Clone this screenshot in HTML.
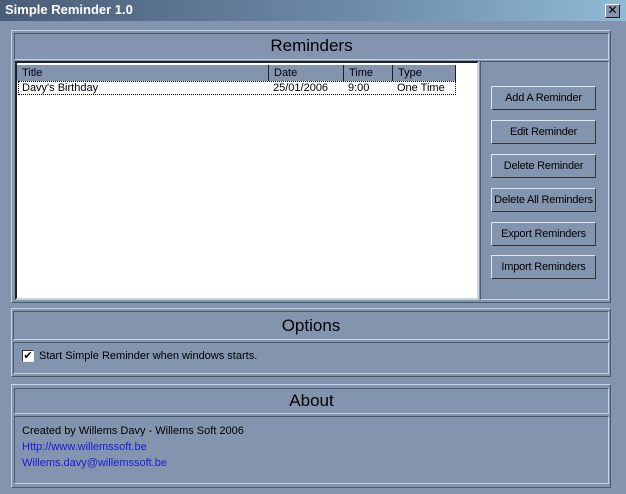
<html><head><style>
body{margin:0;width:626px;height:494px;background:#8395ae;font-family:"Liberation Sans",sans-serif;font-size:11px;position:relative;overflow:hidden}
div{position:absolute;box-sizing:border-box}
.t{left:0;top:0;width:626px;height:21px;background:linear-gradient(90deg,#4a5d78,#6f8eaa 60%,#8fbad6);color:#fff;font-weight:bold;font-size:13px;padding:2px 5px}
.x{left:605px;top:4px;width:15px;height:14px;background:#8395ae;border:1px solid;border-color:#fff #222 #222 #fff;font-size:12px;line-height:11px;text-align:center;color:#000}
.g{border:1px solid;border-color:#c8d4e2 #4c5a6c #4c5a6c #c8d4e2}
.s{border:1px solid;border-color:#4c5a6c #c8d4e2 #c8d4e2 #4c5a6c}
.h{font-size:17px;text-align:center;color:#000}
.b{left:491px;width:105px;height:24px;border:1px solid;border-color:#e0e8f0 #333 #333 #e0e8f0;text-align:center;line-height:22px;font-size:11px;letter-spacing:-0.2px;white-space:nowrap}
.hd{top:2px;height:16px;background:#8395ae;border-right:1px solid #222;padding:2px 5px;font-size:11px}
</style></head><body>
<div class="t">Simple Reminder 1.0</div>
<div class="x">✕</div>
<div class="g" style="left:11px;top:30px;width:600px;height:273px"></div>
<div class="s" style="left:14px;top:33px;width:595px;height:27px"></div>
<div class="h" style="left:14px;top:36px;width:595px">Reminders</div>
<div style="left:15px;top:61px;width:464px;height:239px;background:#fff;border:2px solid;border-color:#222 #c8d4e2 #c8d4e2 #222">
<div class="hd" style="left:0;width:252px;border-left:0">Title</div>
<div class="hd" style="left:252px;width:75px">Date</div>
<div class="hd" style="left:327px;width:49px">Time</div>
<div class="hd" style="left:376px;width:63px">Type</div>
<div style="left:1px;top:18px;width:438px;height:14px;border:1px dotted #000;padding:0 3px">Davy's Birthday</div>
<div style="left:256px;top:19px">25/01/2006</div>
<div style="left:331px;top:19px">9:00</div>
<div style="left:380px;top:19px">One Time</div>
</div>
<div class="s" style="left:480px;top:61px;width:129px;height:239px"></div>
<div class="b" style="top:86px">Add A Reminder</div>
<div class="b" style="top:120px">Edit Reminder</div>
<div class="b" style="top:154px">Delete Reminder</div>
<div class="b" style="top:188px">Delete All Reminders</div>
<div class="b" style="top:222px">Export Reminders</div>
<div class="b" style="top:255px">Import Reminders</div>
<div class="g" style="left:11px;top:308px;width:600px;height:69px"></div>
<div class="s" style="left:13px;top:311px;width:596px;height:29px"></div>
<div class="h" style="left:13px;top:316px;width:596px">Options</div>
<div class="s" style="left:13px;top:342px;width:596px;height:32px"></div>
<div style="left:22px;top:350px;width:12px;height:12px;background:#fff;border:1px solid;border-color:#333 #eee #eee #333;font-size:11px;line-height:10px;text-align:center">✔</div>
<div style="left:39px;top:350px">Start Simple Reminder when windows starts.</div>
<div class="g" style="left:11px;top:384px;width:600px;height:104px"></div>
<div class="s" style="left:14px;top:388px;width:595px;height:26px"></div>
<div class="h" style="left:14px;top:391px;width:595px">About</div>
<div class="s" style="left:14px;top:416px;width:595px;height:68px"></div>
<div style="left:22px;top:425px">Created by Willems Davy - Willems Soft 2006</div>
<div style="left:22px;top:441px;color:#1a1ad8">Http://www.willemssoft.be</div>
<div style="left:22px;top:457px;color:#1a1ad8">Willems.davy@willemssoft.be</div>
</body></html>
